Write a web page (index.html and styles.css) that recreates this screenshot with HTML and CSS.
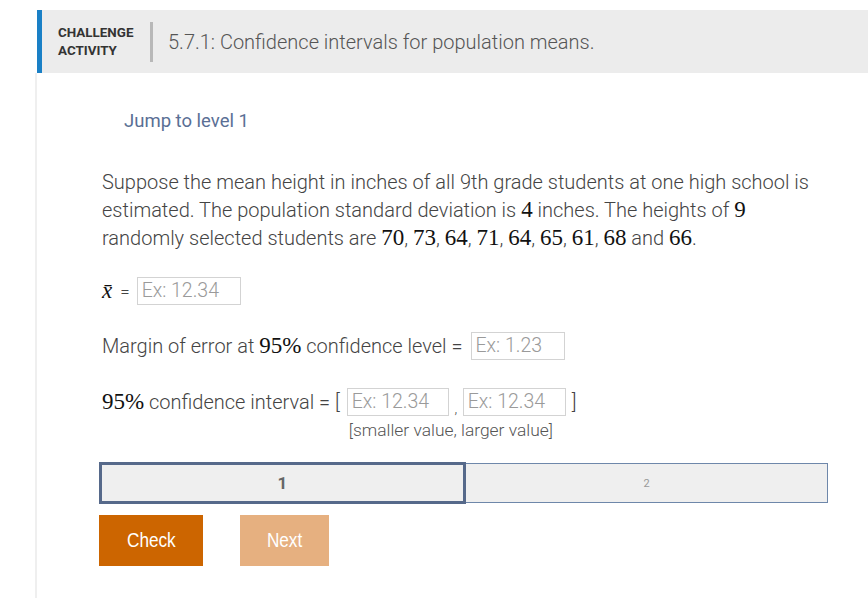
FILE: index.html
```html
<!DOCTYPE html>
<html>
<head>
<meta charset="utf-8">
<link rel="stylesheet" href="styles.css">
</head>
<body>
<div class="wrap">
  <header class="head">
    <div class="label">CHALLENGE<br>ACTIVITY</div>
    <div class="divider"></div>
    <div class="title">5.7.1: Confidence intervals for population means.</div>
  </header>
  <main class="panel">
    <div class="jump">Jump to level 1</div>
    <p class="question">Suppose the mean height in inches of all 9th grade students at one high school is<br>estimated. The population standard deviation is <span class="m">4</span> inches. The heights of <span class="m">9</span><br>randomly selected students are <span class="m">70</span>, <span class="m">73</span>, <span class="m">64</span>, <span class="m">71</span>, <span class="m">64</span>, <span class="m">65</span>, <span class="m">61</span>, <span class="m">68</span> and <span class="m">66</span>.</p>
    <div class="row row-xbar">
      <span class="m mi">x̄</span><span class="eq">=</span><span class="inp w104">Ex: 12.34</span>
    </div>
    <div class="row row-moe">
      <span>Margin of error at <span class="m">95%</span> confidence level =</span><span class="inp w94 ml">Ex: 1.23</span>
    </div>
    <div class="row row-ci">
      <span><span class="m">95%</span> confidence interval = [</span>
      <div class="ci-group">
        <div class="ci-inputs">
          <span class="inp w102">Ex: 12.34</span><span class="comma">,</span><span class="inp w103">Ex: 12.34</span>
        </div>
        <div class="hint">[smaller value, larger value]</div>
      </div>
      <span class="close">]</span>
    </div>
    <div class="levels">
      <div class="lvl lvl-active">1</div>
      <div class="lvl lvl-next">2</div>
    </div>
    <div class="buttons">
      <div class="btn btn-check"><span>Check</span></div>
      <div class="btn btn-next"><span>Next</span></div>
    </div>
  </main>
</div>
</body>
</html>
```
FILE: styles.css
```css
html, body { margin: 0; padding: 0; background: #fff; }
body { font-family: Roboto, "Liberation Sans", sans-serif; color: #444; }
.wrap { margin: 10px 0 0 35px; }
.head {
  margin-left: 2px;
  height: 63px;
  background: #ececec;
  border-left: 5px solid #1a80c6;
  display: flex;
  align-items: center;
}
.label {
  font-size: 13.4px;
  font-weight: 700;
  line-height: 18px;
  color: #333;
  padding-left: 16px;
  width: 92px;
}
.divider { width: 3px; height: 40px; background: #b8b8b8; }
.title { margin-left: 15px; font-size: 20px; font-weight: 300; color: #555; }
.panel {
  border-left: 2px solid #efefef;
  padding: 38px 0 30px 65px;
  min-height: 460px;
}
.jump { margin-left: 22px; font-size: 18.5px; color: #5a6f95; line-height: 20px; }
.question {
  margin: 37px 0 0 0;
  font-size: 20px;
  font-weight: 300;
  line-height: 28px;
  color: #444;
}
.m { font-family: "Liberation Serif", "DejaVu Serif", serif; font-size: 23px; color: #111; font-weight: 400; line-height: 20px; }
.mi { font-style: italic; font-size: 23px; }
.row { display: flex; align-items: center; font-size: 20px; font-weight: 300; color: #444; }
.row-xbar { margin-top: 25px; }
.eq { margin: 0 7px 0 8px; font-size: 17px; }
.inp {
  display: inline-block;
  box-sizing: border-box;
  height: 28px;
  border: 1px solid #d3d3d3;
  color: #9a9a9a;
  font-size: 19.5px;
  font-weight: 300;
  line-height: 26px;
  padding-left: 4px;
  white-space: nowrap;
}
.w104 { width: 104px; }
.w94 { width: 94px; }
.w102 { width: 102px; }
.w103 { width: 103px; }
.ml { margin-left: 8px; }
.row-moe { margin-top: 27px; }
.row-ci { margin-top: 28px; align-items: flex-start; }
.row-ci > span:first-child { line-height: 28px; }
.ci-group { display: flex; flex-direction: column; margin-left: 7px; }
.ci-inputs { display: flex; align-items: flex-end; }
.comma { width: 14px; text-align: center; font-size: 14px; line-height: 16px; }
.hint { font-size: 17.4px; font-weight: 300; color: #555; margin-top: 3px; margin-left: 2px; line-height: 22px; }
.close { margin-left: 6px; line-height: 28px; }
.levels { display: flex; margin-top: 21px; margin-left: -3px; width: 729px; }
.lvl {
  box-sizing: border-box;
  height: 42px;
  background: #efefef;
  display: flex;
  align-items: center;
  justify-content: center;
}
.lvl-active { width: 367px; border: 3px solid #56698a; font-size: 17px; font-weight: 700; color: #666; }
.lvl-next { width: 362px; border: 1px solid #6e87aa; border-left: none; margin-top: 1px; height: 40px; font-size: 11px; color: #999; }
.buttons { display: flex; gap: 37px; margin-top: 11px; margin-left: -3px; }
.btn {
  height: 51px;
  display: flex;
  align-items: center;
  justify-content: center;
  color: #fff;
  font-family: "Liberation Sans Narrow", "Liberation Sans", sans-serif;
  font-size: 20px;
}
.btn span { display: inline-block; transform: scaleX(0.86); }
.btn-check { width: 104px; background: #cc6500; }
.btn-next { width: 89px; background: #e6b080; }
```
